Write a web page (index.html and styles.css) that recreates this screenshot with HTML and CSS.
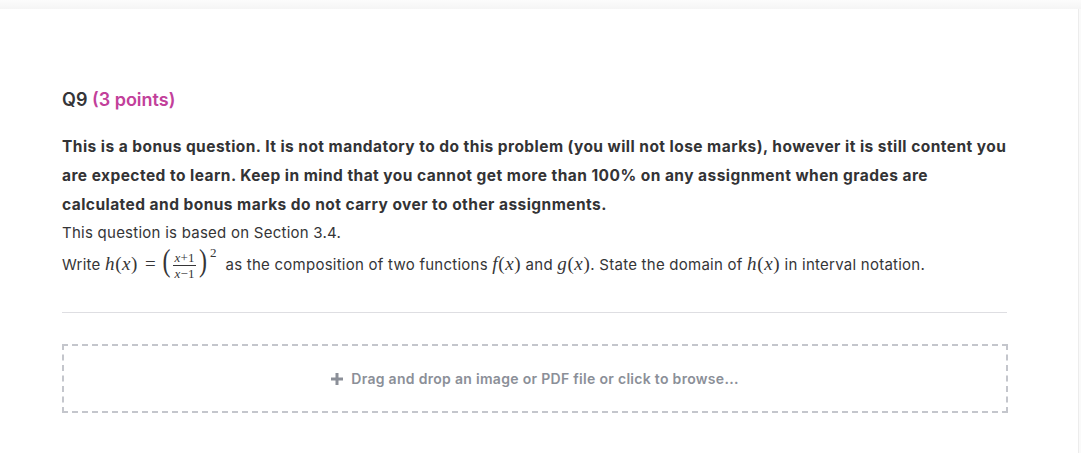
FILE: index.html
```html
<!DOCTYPE html>
<html>
<head>
<meta charset="utf-8">
<link rel="stylesheet" href="styles.css">
</head>
<body>
<div class="topbar"></div>
<div class="card">
  <h2 class="qtitle">Q9 <span class="points">(3 points)</span></h2>
  <div class="question">
    <p class="bold">This is a bonus question. It is not mandatory to do this problem (you will not lose marks), however it is still content you are expected to learn. Keep in mind that you cannot get more than 100% on any assignment when grades are calculated and bonus marks do not carry over to other assignments.</p>
    <p class="plain">This question is based on Section 3.4.</p>
    <p class="plain write">Write <span class="m"><i>h</i>(<i>x</i>)</span><span class="m eq">=</span><span class="m paren">(</span><span class="frac"><span class="num"><i>x</i>+1</span><span class="den"><i>x</i>−1</span></span><span class="m paren">)</span><sup class="m sq">2</sup> as the composition of two functions <span class="m"><i>f</i>(<i>x</i>)</span> and <span class="m"><i>g</i>(<i>x</i>)</span>. State the domain of <span class="m"><i>h</i>(<i>x</i>)</span> in interval notation.</p>
  </div>
  <hr class="sep">
  <div class="drop">
    <span class="plus">
      <svg width="12" height="12" viewBox="0 0 12 12"><path d="M4.5 0h3v4.5H12v3H7.5V12h-3V7.5H0v-3h4.5z" fill="#8b8f98"/></svg>
    </span>
    <span>Drag and drop an image or PDF file or click to browse...</span>
  </div>
</div>
</body>
</html>
```
FILE: styles.css
```css
html, body {
  margin: 0;
  padding: 0;
  background: #fafafa;
}
body {
  font-family: Inter, "Noto Sans", sans-serif;
  color: #353537;
}
.topbar {
  height: 9px;
  background: linear-gradient(#fcfcfc, #f5f5f5);
}
.card {
  background: #fff;
  width: 1079px;
  border-right: 1px solid #ececec;
  padding: 78px 0 40px 62px;
  box-sizing: border-box;
  min-height: 444px;
}
.qtitle {
  margin: 0;
  font-size: 18px;
  font-weight: 600;
  line-height: 26px;
  color: #353538;
}
.points {
  color: #c2409a;
}
.question {
  width: 948px;
  margin-top: 19px;
}
.question p {
  margin: 0;
}
.bold {
  font-size: 15.5px;
  font-weight: 700;
  line-height: 29px;
  color: #333335;
  letter-spacing: 0.45px;
}
.plain {
  font-size: 15px;
  line-height: 28px;
  color: #353537;
  letter-spacing: 0.25px;
}
.write {
  line-height: 34px;
}
.m {
  font-family: "Liberation Serif", "DejaVu Serif", serif;
  font-size: 19px;
  letter-spacing: 0.6px;
}
.m i, .frac i {
  font-style: italic;
}
.eq {
  margin: 0 6px 0 7px;
}
.paren {
  display: inline-block;
  font-size: 24px;
  line-height: 20px;
  transform: scaleY(1.3);
  vertical-align: 1px;
  letter-spacing: 0;
}
.frac {
  display: inline-flex;
  flex-direction: column;
  vertical-align: 8px;
  font-family: "Liberation Serif", serif;
  font-size: 13px;
  line-height: 13px;
  text-align: center;
  margin: 0 3px;
  letter-spacing: 0.3px;
}
.num {
  border-bottom: 1px solid #353537;
  padding: 0 1px 1px;
}
.den {
  padding-top: 1px;
}
.sq {
  font-size: 13px;
  vertical-align: 13px;
  line-height: 0;
  margin-left: 3px;
  margin-right: 4px;
}
.sep {
  width: 945px;
  margin: 30px 0 0;
  border: 0;
  border-top: 1px solid #dedee2;
}
.drop {
  width: 946px;
  height: 69px;
  margin-top: 31px;
  box-sizing: border-box;
  border: 2px dashed #c4c6cc;
  display: flex;
  align-items: center;
  justify-content: center;
  gap: 8px;
  font-size: 14px;
  font-weight: 600;
  color: #8b8f98;
  letter-spacing: 0.3px;
}
.plus {
  display: flex;
}
```
